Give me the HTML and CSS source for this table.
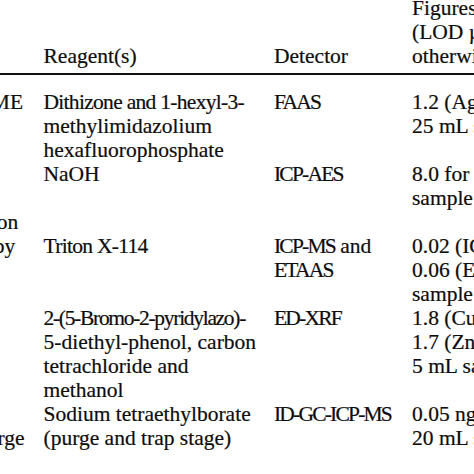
FILE: index.html
```html
<!DOCTYPE html>
<html lang="en">
<head>
<meta charset="utf-8">
<title>Table</title>
<link rel="stylesheet" href="styles.css">
</head>
<body>
<div class="frame">
  <table class="data">
    <colgroup>
      <col class="c-method">
      <col class="c-reagent">
      <col class="c-detector">
      <col class="c-figures">
    </colgroup>
    <thead>
      <tr>
        <th>Step</th>
        <th>Reagent(s)</th>
        <th>Detector</th>
        <th>Figures of merit<br>(LOD µg L<sup>−1</sup> unless<br>otherwise stated)</th>
      </tr>
    </thead>
    <tbody>
      <tr class="first">
        <td>DLLME</td>
        <td><span class="t1">Dithizone and 1-hexyl-3-</span><br>methylimidazolium<br>hexafluorophosphate</td>
        <td><span class="cap">FAAS</span></td>
        <td>1.2 (Ag) and 2.5 (Pb);<br>25 mL sample</td>
      </tr>
      <tr>
        <td>Basic<br>leach<br>solution</td>
        <td>NaOH</td>
        <td><span class="cap">ICP-AES</span></td>
        <td>8.0 for Cr; 0.5 g<br>sample</td>
      </tr>
      <tr>
        <td>CPE by<br>heat</td>
        <td><span class="t1">Triton X-114</span></td>
        <td><span class="cap">ICP-MS</span> and<br><span class="cap">ETAAS</span></td>
        <td>0.02 (ICP-MS) and<br>0.06 (ETAAS); 10 mL<br>sample</td>
      </tr>
      <tr>
        <td>LLE</td>
        <td><span class="t2">2-(5-Bromo-2-pyridylazo)-</span><br>5-diethyl-phenol, carbon<br>tetrachloride and<br>methanol</td>
        <td><span class="cap">ED-XRF</span></td>
        <td>1.8 (Cu) and<br>1.7 (Zn);<br>5 mL sample</td>
      </tr>
      <tr>
        <td>Run<br>on purge</td>
        <td>Sodium tetraethylborate<br>(purge and trap stage)</td>
        <td><span class="cap">ID-GC-ICP-MS</span></td>
        <td>0.05 ng g<sup>−1</sup> (Hg);<br>20 mL sample</td>
      </tr>
    </tbody>
  </table>
</div>
</body>
</html>
```

FILE: styles.css
```css
html, body {
  margin: 0;
  padding: 0;
  background: #ffffff;
}

.frame {
  width: 474px;
  height: 474px;
  overflow: hidden;
}

.data {
  table-layout: fixed;
  border-collapse: collapse;
  width: 761px;
  margin-top: -4px;
  margin-left: -51px;
  font-family: "Liberation Serif", "Times New Roman", serif;
  font-size: 21.5px;
  line-height: 24px;
  color: #0d0d0d;
  -webkit-text-stroke: 0.2px #0d0d0d;
}

.c-method { width: 94.5px; }
.c-reagent { width: 230.5px; }
.c-detector { width: 138px; }
.c-figures { width: 298px; }

.data th,
.data td {
  padding: 0;
  text-align: left;
  vertical-align: top;
  white-space: nowrap;
  font-weight: normal;
}

.data th {
  vertical-align: bottom;
  padding-bottom: 5px;
  border-bottom: 2px solid #111111;
}

.data tr.first td {
  padding-top: 15px;
}

.data sup {
  font-size: 0.65em;
  line-height: 0;
  vertical-align: 0.5em;
}

/* narrower capitals and figures of the original face */
.cap { letter-spacing: -1.8px; }
.t1 { letter-spacing: -0.7px; }
.t2 { letter-spacing: -1.3px; }
```
